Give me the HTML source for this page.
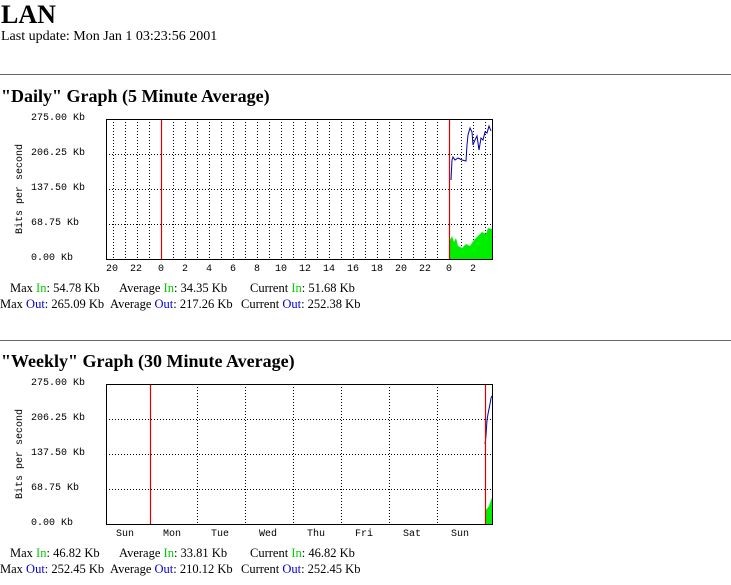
<!DOCTYPE html>
<html><head><meta charset="utf-8"><style>
html,body{margin:0;padding:0;background:#fff;width:731px;height:585px;overflow:hidden;position:relative;font-family:"Liberation Serif",serif;color:#000}
.a{position:absolute;white-space:nowrap;line-height:1}
.m{font-family:"Liberation Mono",monospace;font-size:10px}
.s{font-size:12.5px}
.g{color:#00cc00}.b{color:#0000cc}
hr{position:absolute;left:0;width:731px;margin:0;border:0;border-top:1px solid #666;height:0}
</style></head><body>
<div class="a" style="left:1px;top:2px;font-size:26px;font-weight:bold">LAN</div>
<div class="a" style="left:1px;top:30px;font-size:14px">Last update: Mon Jan 1 03:23:56 2001</div>
<hr style="top:74px">
<div class="a" style="left:1px;top:87px;font-size:18px;font-weight:bold">"Daily" Graph (5 Minute Average)</div>

<svg class="a" style="left:0;top:0" width="731" height="585">
<g stroke="#000" stroke-width="1" stroke-dasharray="1,2" fill="none">
<path d="M113.5 119V259M125.5 119V259M137.5 119V259M149.5 119V259M173.5 119V259M185.5 119V259M197.5 119V259M209.5 119V259M221.5 119V259M233.5 119V259M245.5 119V259M257.5 119V259M269.5 119V259M281.5 119V259M293.5 119V259M305.5 119V259M317.5 119V259M329.5 119V259M341.5 119V259M353.5 119V259M365.5 119V259M377.5 119V259M389.5 119V259M401.5 119V259M413.5 119V259M425.5 119V259M437.5 119V259M461.5 119V259M473.5 119V259M485.5 119V259"/>
<path d="M106 154.5H493M106 189.5H493M106 224.5H493"/>
<path d="M197.5 384V524M245.5 384V524M293.5 384V524M341.5 384V524M389.5 384V524M437.5 384V524"/>
<path d="M106 419.5H493M106 454.5H493M106 489.5H493"/>
</g>
<polygon fill="#00ee00" points="450,259 450,240 452,236 454,242 456,238 458,246 462,248 466,244 470,246 474,240 478,236 482,232 486,234 488,228 492,229 492,259"/>
<polyline fill="none" stroke="#0000aa" stroke-width="1" points="451,180 452,160 453,157 455,160 458,158 462,160 466,161 467,145 468,135 470,128 472,132 473,145 475,140 477,136 479,150 481,138 483,140 485,132 487,133 489,126 491,131"/>
<polygon fill="#00ee00" points="486,524 486,510 489,506 491,500 492,498 492,524"/>
<polyline fill="none" stroke="#0000aa" points="485,444 486,436 487,420 488,414 490,404 491,398 492,396"/>
<rect x="106.5" y="119.5" width="386" height="140" fill="none" stroke="#000"/>
<rect x="106.5" y="384.5" width="386" height="140" fill="none" stroke="#000"/>
<g stroke="#e00000" stroke-width="1.2">
<line x1="161.5" y1="120" x2="161.5" y2="259"/>
<line x1="449.5" y1="120" x2="449.5" y2="259"/>
<line x1="150.5" y1="385" x2="150.5" y2="524"/>
<line x1="485.5" y1="385" x2="485.5" y2="524"/>
</g>
<text x="19" y="189" transform="rotate(-90 19 189)" text-anchor="middle" font-family="Liberation Mono,monospace" font-size="10" dy="3">Bits per second</text>
<text x="19" y="454" transform="rotate(-90 19 454)" text-anchor="middle" font-family="Liberation Mono,monospace" font-size="10" dy="3">Bits per second</text>
</svg>

<div class="a m" style="left:31px;top:114px">275.00 Kb</div>
<div class="a m" style="left:31px;top:149px">206.25 Kb</div>
<div class="a m" style="left:31px;top:184px">137.50 Kb</div>
<div class="a m" style="left:31px;top:219px">68.75 Kb</div>
<div class="a m" style="left:31px;top:254px">0.00 Kb</div>
<div class="m" style="position:absolute;top:265px;left:0">
<span class="a" style="left:106px">20</span><span class="a" style="left:130px">22</span><span class="a" style="left:158px">0</span><span class="a" style="left:182px">2</span><span class="a" style="left:206px">4</span><span class="a" style="left:230px">6</span><span class="a" style="left:254px">8</span><span class="a" style="left:275px">10</span><span class="a" style="left:299px">12</span><span class="a" style="left:323px">14</span><span class="a" style="left:347px">16</span><span class="a" style="left:371px">18</span><span class="a" style="left:395px">20</span><span class="a" style="left:419px">22</span><span class="a" style="left:446px">0</span><span class="a" style="left:470px">2</span></div>
<div class="a s" style="left:10px;top:282px">Max <span class="g">In</span>: 54.78 Kb</div>
<div class="a s" style="left:119px;top:282px">Average <span class="g">In</span>: 34.35 Kb</div>
<div class="a s" style="left:250px;top:282px">Current <span class="g">In</span>: 51.68 Kb</div>
<div class="a s" style="left:0;top:298px">Max <span class="b">Out</span>: 265.09 Kb</div>
<div class="a s" style="left:110px;top:298px">Average <span class="b">Out</span>: 217.26 Kb</div>
<div class="a s" style="left:241px;top:298px">Current <span class="b">Out</span>: 252.38 Kb</div>

<hr style="top:340px">
<div class="a" style="left:1px;top:352px;font-size:18px;font-weight:bold">"Weekly" Graph (30 Minute Average)</div>
<div class="a m" style="left:31px;top:379px">275.00 Kb</div>
<div class="a m" style="left:31px;top:414px">206.25 Kb</div>
<div class="a m" style="left:31px;top:449px">137.50 Kb</div>
<div class="a m" style="left:31px;top:484px">68.75 Kb</div>
<div class="a m" style="left:31px;top:519px">0.00 Kb</div>
<div class="m" style="position:absolute;top:530px;left:0">
<span class="a" style="left:116px">Sun</span><span class="a" style="left:163px">Mon</span><span class="a" style="left:211px">Tue</span><span class="a" style="left:259px">Wed</span><span class="a" style="left:307px">Thu</span><span class="a" style="left:355px">Fri</span><span class="a" style="left:403px">Sat</span><span class="a" style="left:451px">Sun</span></div>
<div class="a s" style="left:10px;top:547px">Max <span class="g">In</span>: 46.82 Kb</div>
<div class="a s" style="left:119px;top:547px">Average <span class="g">In</span>: 33.81 Kb</div>
<div class="a s" style="left:250px;top:547px">Current <span class="g">In</span>: 46.82 Kb</div>
<div class="a s" style="left:0;top:563px">Max <span class="b">Out</span>: 252.45 Kb</div>
<div class="a s" style="left:110px;top:563px">Average <span class="b">Out</span>: 210.12 Kb</div>
<div class="a s" style="left:241px;top:563px">Current <span class="b">Out</span>: 252.45 Kb</div>
</body></html>
